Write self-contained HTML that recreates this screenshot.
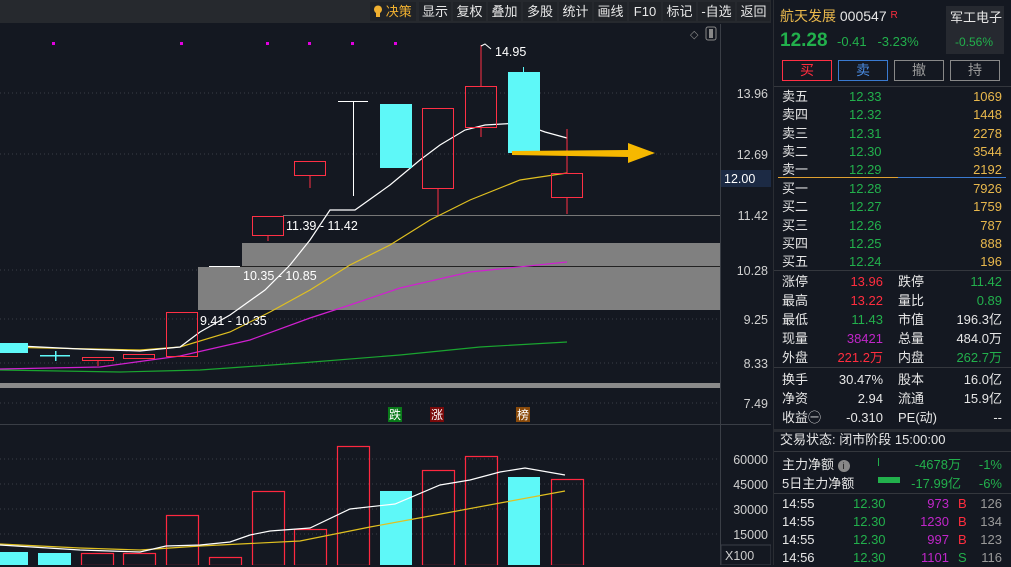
<!DOCTYPE html>
<html><head><meta charset="utf-8"><style>
*{margin:0;padding:0;box-sizing:border-box}
body{width:1011px;height:565px;background:#141821;overflow:hidden;position:relative;font-family:"Liberation Sans","Noto Sans CJK SC",sans-serif;font-size:13px;color:#e6e6e6}
.tb{position:absolute;left:0;top:0;width:771px;height:23px;background:#26292e}
.tb span{position:absolute;top:2px;height:19px;line-height:19px;background:#202328;color:#e8e8e8;font-size:13px;text-align:center}
svg{position:absolute;left:0;top:0}
.rp{position:absolute;left:773px;top:0;width:238px;height:565px;background:#141821;border-left:1px solid #2a2d33}
.a{position:absolute;white-space:nowrap;line-height:16px}
.g{color:#22b04c}.r{color:#ff2d3e}.y{color:#e9b84c}.m{color:#c026c9}.w{color:#e6e6e6}.gr{color:#9a9a9a}
.hl{position:absolute;left:0;width:237px;height:1px;background:#34373d}
.btn{position:absolute;top:60px;width:50px;height:21px;border:1px solid #888;text-align:center;line-height:19px;font-size:14px}
</style></head><body>
<div class="tb">
<span style="left:370px;width:46px;color:#f0b030"><svg style="position:relative;display:inline-block;vertical-align:-2px" width="8" height="13" viewBox="0 0 8 13"><circle cx="4" cy="4.5" r="4" fill="#f0b030"/><rect x="2" y="8" width="4" height="4" fill="#f0b030"/></svg> 决策</span>
<span style="left:419px;width:32px">显示</span>
<span style="left:453px;width:33px">复权</span>
<span style="left:488px;width:33px">叠加</span>
<span style="left:523px;width:34px">多股</span>
<span style="left:559px;width:33px">统计</span>
<span style="left:594px;width:33px">画线</span>
<span style="left:629px;width:32px">F10</span>
<span style="left:663px;width:33px">标记</span>
<span style="left:698px;width:37px">-自选</span>
<span style="left:737px;width:33px">返回</span>
</div>
<svg width="771" height="565" viewBox="0 0 771 565" font-family="Liberation Sans" font-size="12">
<g stroke="#3a3e46" stroke-dasharray="1 3">
<line x1="0" y1="93" x2="720" y2="93"/><line x1="0" y1="154" x2="720" y2="154"/><line x1="0" y1="270" x2="720" y2="270"/><line x1="0" y1="319" x2="720" y2="319"/><line x1="0" y1="363" x2="720" y2="363"/><line x1="0" y1="403" x2="720" y2="403"/>
<line x1="0" y1="459" x2="720" y2="459"/><line x1="0" y1="484" x2="720" y2="484"/><line x1="0" y1="509" x2="720" y2="509"/><line x1="0" y1="534" x2="720" y2="534"/>
</g>
<line x1="720.5" y1="24" x2="720.5" y2="565" stroke="#3a3e46"/>
<line x1="0" y1="424.5" x2="771" y2="424.5" stroke="#3a3e46"/>
<rect x="242" y="243" width="478" height="23" fill="#808080"/>
<rect x="198" y="267" width="522" height="43" fill="#808080"/>
<line x1="209" y1="266.5" x2="720" y2="266.5" stroke="#222" />
<line x1="209" y1="266.5" x2="240" y2="266.5" stroke="#fff"/>
<line x1="283" y1="215.5" x2="720" y2="215.5" stroke="#777"/>
<rect x="0" y="383" width="720" height="5" fill="#8a8a8a"/>
<g fill="#e000e0"><rect x="52" y="42" width="3" height="3"/><rect x="180" y="42" width="3" height="3"/><rect x="266" y="42" width="3" height="3"/><rect x="308" y="42" width="3" height="3"/><rect x="351" y="42" width="3" height="3"/><rect x="394" y="42" width="3" height="3"/></g>
<polyline fill="none" stroke="#1aa530" stroke-width="1.2" points="0,370 120,372 160,371 200,370 300,363 400,355 480,347 567,342"/>
<polyline fill="none" stroke="#d020d0" stroke-width="1.2" points="0,369 100,367 180,356 250,340 310,318 350,305 400,288 470,272 567,262"/>
<polyline fill="none" stroke="#e0c020" stroke-width="1.2" points="0,347 140,350 180,347 230,332 270,312 310,290 350,265 390,245 430,220 470,200 520,180 567,173"/>
<polyline fill="none" stroke="#fff" stroke-width="1.2" points="0,345 80,349 140,351 180,347 200,332 230,315 265,290 290,265 310,240 330,210 355,210 390,185 420,160 440,145 465,130 485,125 520,123 545,132 567,138"/>
<g stroke="#ff3045" fill="none">
<rect x="82.5" y="357.5" width="31" height="3"/><line x1="98" y1="360" x2="98" y2="366"/>
<rect x="123.5" y="354.5" width="31" height="4"/>
<rect x="166.5" y="312.5" width="31" height="44"/>
<rect x="252.5" y="216.5" width="31" height="19"/><line x1="268" y1="235" x2="268" y2="241"/>
<rect x="294.5" y="161.5" width="31" height="14"/><line x1="310" y1="175" x2="310" y2="188"/>
<rect x="422.5" y="108.5" width="31" height="80"/><line x1="438" y1="188" x2="438" y2="215"/>
<rect x="465.5" y="86.5" width="31" height="41"/><line x1="481" y1="45" x2="481" y2="86"/><line x1="481" y1="127" x2="481" y2="137"/>
<rect x="551.5" y="173.5" width="31" height="24"/><line x1="567" y1="129" x2="567" y2="173"/><line x1="567" y1="197" x2="567" y2="214"/>
</g>
<g fill="#5ef8f8"><rect x="0" y="343" width="28" height="10"/><rect x="380" y="104" width="32" height="64"/><rect x="508" y="72" width="32" height="81"/><rect x="523" y="67" width="1" height="5"/><rect x="40" y="355" width="30" height="1.5"/><rect x="55" y="351" width="1.5" height="10"/></g>
<g stroke="#fff"><line x1="338" y1="101.5" x2="368" y2="101.5"/><line x1="353.5" y1="101" x2="353.5" y2="196"/></g>
<polygon points="512,151 628,150 628,143 655,153 628,163 628,157 512,155" fill="#f6b800"/>
<g fill="#fff" font-size="12.5">
<text x="286" y="230">11.39 - 11.42</text>
<text x="243" y="280">10.35 - 10.85</text>
<text x="200" y="325">9.41 - 10.35</text>
<text x="495" y="56">14.95</text>
</g>
<path d="M481 46 l4 -2 l6 5" stroke="#fff" fill="none"/>
<text x="690" y="38" fill="#888" font-size="11">◇</text>
<rect x="706" y="27" width="10" height="13" rx="2" fill="none" stroke="#888"/><rect x="709" y="29" width="4" height="9" fill="#888"/>
<g fill="#d0d0d0" font-size="12.5" text-anchor="end">
<text x="768" y="98">13.96</text><text x="768" y="159">12.69</text><text x="768" y="220">11.42</text><text x="768" y="275">10.28</text><text x="768" y="324">9.25</text><text x="768" y="368">8.33</text><text x="768" y="408">7.49</text>
<text x="768" y="464">60000</text><text x="768" y="489">45000</text><text x="768" y="514">30000</text><text x="768" y="539">15000</text>
</g>
<rect x="721" y="170" width="50" height="17" fill="#1c2a44"/><text x="724" y="183" fill="#fff" font-size="12.5">12.00</text>
<rect x="721" y="545" width="50" height="20" fill="#141821" stroke="#3a3e46"/><text x="725" y="560" fill="#ccc" font-size="12.5">X100</text>
<rect x="388" y="407" width="14" height="15" fill="#0a7a1a"/><text x="389" y="419" fill="#fff" font-size="12" font-family="Noto Sans CJK SC">跌</text>
<rect x="430" y="407" width="14" height="15" fill="#7a0a0a"/><text x="431" y="419" fill="#fff" font-size="12" font-family="Noto Sans CJK SC">涨</text>
<rect x="516" y="407" width="14" height="15" fill="#8a4a0a"/><text x="517" y="419" fill="#fff" font-size="12" font-family="Noto Sans CJK SC">榜</text>
<g fill="#5ef8f8"><rect x="0" y="552" width="28" height="13"/><rect x="38" y="553" width="33" height="12"/><rect x="380" y="491" width="32" height="74"/><rect x="508" y="477" width="32" height="88"/></g>
<g stroke="#ff2840" stroke-width="1.2" fill="none">
<rect x="81.5" y="553.5" width="32" height="12"/><rect x="123.5" y="553.5" width="32" height="12"/><rect x="166.5" y="515.5" width="32" height="50"/><rect x="209.5" y="557.5" width="32" height="8"/><rect x="252.5" y="491.5" width="32" height="74"/><rect x="294.5" y="529.5" width="32" height="36"/><rect x="337.5" y="446.5" width="32" height="119"/><rect x="422.5" y="470.5" width="32" height="95"/><rect x="465.5" y="456.5" width="32" height="109"/><rect x="551.5" y="479.5" width="32" height="86"/>
</g>
<polyline fill="none" stroke="#e0c020" stroke-width="1.2" points="0,544 80,548 140,550 200,546 300,541 370,527 430,516 500,503 565,491"/>
<polyline fill="none" stroke="#fff" stroke-width="1.2" points="0,545 80,550 140,552 166,546 200,545 230,542 250,535 270,531 310,528 350,509 395,504 440,485 470,480 500,472 525,468 565,475"/>
</svg>
<div class="rp">
<div class="a" style="left:6px;top:8px;font-size:14px"><span class="y">航天发展</span> <span class="w">000547</span> <span class="r" style="font-size:10px;vertical-align:top">R</span></div>
<div style="position:absolute;left:172px;top:6px;width:58px;height:48px;background:#262930"></div>
<div class="a w" style="left:176px;top:10px;font-size:13px">军工电子</div>
<div class="a g" style="left:181px;top:34px;font-size:12px">-0.56%</div>
<div class="a g" style="left:6px;top:31px;font-size:19px;font-weight:bold;line-height:20px">12.28</div>
<div class="a g" style="left:63px;top:34px;font-size:13px">-0.41&nbsp;&nbsp;&nbsp;-3.23%</div>
<div class="btn r" style="left:8px;border-color:#ff3045">买</div>
<div class="btn" style="left:64px;border-color:#3a7ad0;color:#4a8ae0">卖</div>
<div class="btn gr" style="left:120px">撤</div>
<div class="btn gr" style="left:176px">持</div>
<div class="hl" style="top:86px"></div>
<div style="position:absolute;left:4px;top:177px;width:120px;height:1px;background:#e0a030"></div>
<div style="position:absolute;left:124px;top:177px;width:108px;height:1px;background:#3a7ad0"></div>
<div class="a w" style="left:8px;top:88px;line-height:18.3px">卖五<br>卖四<br>卖三<br>卖二<br>卖一</div>
<div class="a g" style="left:75px;top:88px;line-height:18.3px">12.33<br>12.32<br>12.31<br>12.30<br>12.29</div>
<div class="a y" style="right:9px;top:88px;line-height:18.3px;text-align:right">1069<br>1448<br>2278<br>3544<br>2192</div>
<div class="a w" style="left:8px;top:180px;line-height:18.3px">买一<br>买二<br>买三<br>买四<br>买五</div>
<div class="a g" style="left:75px;top:180px;line-height:18.3px">12.28<br>12.27<br>12.26<br>12.25<br>12.24</div>
<div class="a y" style="right:9px;top:180px;line-height:18.3px;text-align:right">7926<br>1759<br>787<br>888<br>196</div>
<div class="hl" style="top:270px"></div>
<div class="a w" style="left:8px;top:272px;line-height:19px">涨停<br>最高<br>最低<br>现量<br>外盘</div>
<div class="a" style="right:128px;top:272px;line-height:19px;text-align:right"><span class="r">13.96</span><br><span class="r">13.22</span><br><span class="g">11.43</span><br><span class="m">38421</span><br><span class="r">221.2万</span></div>
<div class="a w" style="left:124px;top:272px;line-height:19px">跌停<br>量比<br>市值<br>总量<br>内盘</div>
<div class="a" style="right:9px;top:272px;line-height:19px;text-align:right"><span class="g">11.42</span><br><span class="g">0.89</span><br><span class="w">196.3亿</span><br><span class="w">484.0万</span><br><span class="g">262.7万</span></div>
<div class="hl" style="top:367px"></div>
<div class="a w" style="left:8px;top:370px;line-height:19px">换手<br>净资<br>收益㊀</div>
<div class="a w" style="right:128px;top:370px;line-height:19px;text-align:right">30.47%<br>2.94<br>-0.310</div>
<div class="a w" style="left:124px;top:370px;line-height:19px">股本<br>流通<br>PE(动)</div>
<div class="a w" style="right:9px;top:370px;line-height:19px;text-align:right">16.0亿<br>15.9亿<br>--</div>
<div style="position:absolute;left:0;top:429px;width:237px;height:3px;background:#2a2d33"></div>
<div class="a w" style="left:6px;top:432px">交易状态: 闭市阶段 15:00:00</div>
<div class="hl" style="top:451px"></div>
<div class="a w" style="left:8px;top:455px;line-height:19px">主力净额 <span style="display:inline-block;width:12px;height:12px;border-radius:6px;background:#888;color:#111;font-size:9px;text-align:center;line-height:12px">i</span><br>5日主力净额</div>
<div style="position:absolute;left:104px;top:458px;width:1px;height:8px;background:#22b04c"></div>
<div style="position:absolute;left:104px;top:477px;width:22px;height:6px;background:#22b04c"></div>
<div class="a g" style="right:50px;top:455px;line-height:19px;text-align:right">-4678万<br>-17.99亿</div>
<div class="a g" style="right:9px;top:455px;line-height:19px;text-align:right">-1%<br>-6%</div>
<div class="hl" style="top:493px"></div>
<div class="a w" style="left:8px;top:495px;line-height:18px">14:55<br>14:55<br>14:55<br>14:56</div>
<div class="a g" style="left:79px;top:495px;line-height:18px">12.30<br>12.30<br>12.30<br>12.30</div>
<div class="a m" style="right:62px;top:495px;line-height:18px;text-align:right">973<br>1230<br>997<br>1101</div>
<div class="a" style="left:184px;top:495px;line-height:18px"><span class="r">B</span><br><span class="r">B</span><br><span class="r">B</span><br><span class="g">S</span></div>
<div class="a gr" style="right:9px;top:495px;line-height:18px;text-align:right">126<br>134<br>123<br>116</div>
</div>
</body></html>
